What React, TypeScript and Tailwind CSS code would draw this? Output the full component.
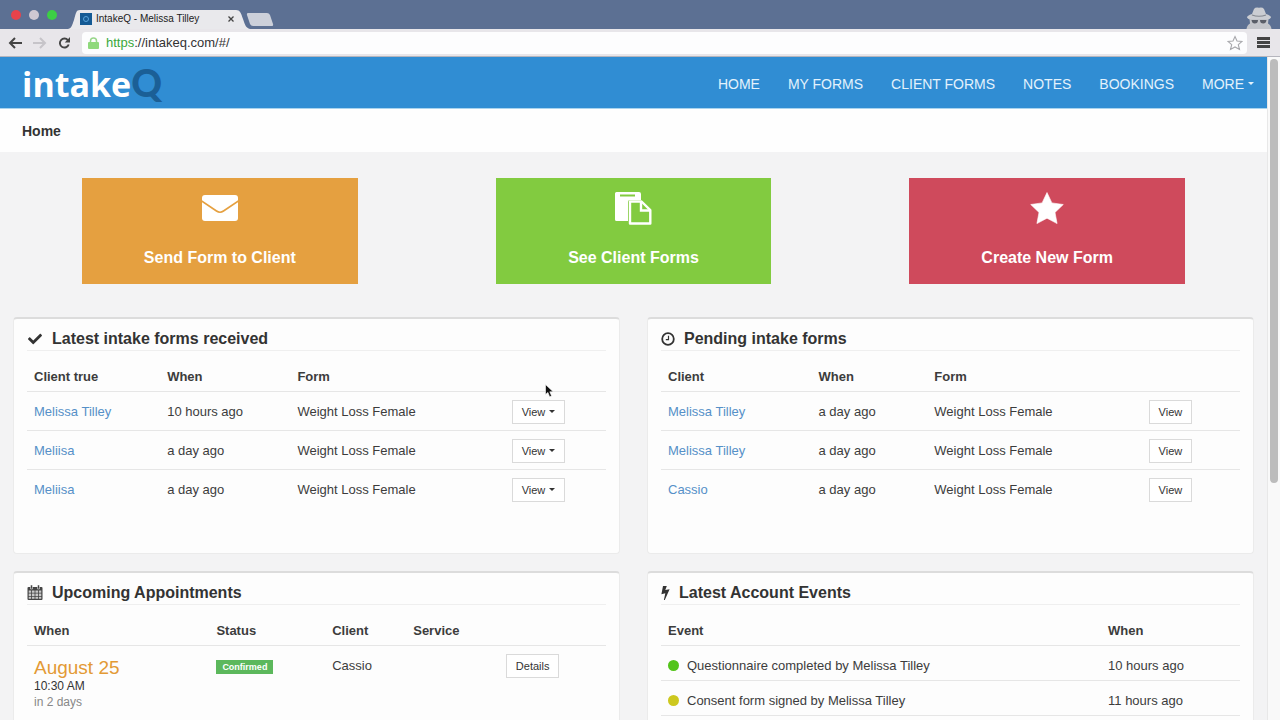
import type { ReactNode } from "react";
import { FaCheck } from "react-icons/fa";

const navItems = ["HOME", "MY FORMS", "CLIENT FORMS", "NOTES", "BOOKINGS"];

function EnvelopeIcon() {
  return (
    <svg viewBox="0 0 36 26" className="h-[26px] w-9" aria-hidden="true">
      <rect width="36" height="26" rx="3" fill="#fff" />
      <path d="M-1 5.500 L14.500 16 Q18 18.500 21.500 16 L37 5.500" fill="none" stroke="#e5a040" strokeWidth="1.600" />
    </svg>
  );
}

function PasteIcon() {
  return (
    <svg viewBox="0 0 37 33" className="h-[33px] w-[37px]" aria-hidden="true">
      <path d="M1.500 0 H24 Q26 0 26 2 V8 H15 Q13 8 13 10 V29 H1.500 Q0 29 0 27.500 V1.500 Q0 0 1.500 0 Z" fill="#fff" />
      <rect x="5" y="2.500" width="15" height="2" fill="#82cb40" />
      <path d="M15 9.500 H26.500 L35.300 18.200 V31.500 H15 Z" fill="none" stroke="#fff" strokeWidth="2.400" strokeLinejoin="round" />
      <path d="M26 10 V18.500 H35" fill="none" stroke="#fff" strokeWidth="2.400" />
    </svg>
  );
}

function StarIcon() {
  return (
    <svg viewBox="0 0 34 32" className="h-8 w-[34px]" aria-hidden="true">
      <path
        d="M17 0.500 L21.900 10.900 L33.300 12.500 L25 20.400 L27.100 31.600 L17 26.200 L6.900 31.600 L9 20.400 L0.700 12.500 L12.100 10.900 Z"
        fill="#fff"
        stroke="#fff"
        strokeWidth="0.600"
        strokeLinejoin="round"
      />
    </svg>
  );
}

function ClockIcon() {
  return (
    <svg viewBox="0 0 14 14" className="h-3.5 w-3.5" fill="none" stroke="#333" aria-hidden="true">
      <circle cx="7" cy="7" r="5.800" strokeWidth="1.800" />
      <path d="M7.500 3.800 V7.600 H4.800" strokeWidth="1.200" />
    </svg>
  );
}

function CalendarIcon() {
  return (
    <svg viewBox="0 0 16 15" className="h-[15px] w-4" aria-hidden="true">
      <path d="M1.500 2 H14.500 Q15.500 2 15.500 3 V14 Q15.500 15 14.500 15 H1.500 Q0.500 15 0.500 14 V3 Q0.500 2 1.500 2 Z" fill="#444" />
      <path d="M3.500 0 H5.500 V4 H3.500 Z M10.500 0 H12.500 V4 H10.500 Z" fill="#444" stroke="#fff" strokeWidth="0.500" />
      <path
        d="M1.700 5.500 h2.500 v2.300 h-2.500z M5 5.500 h2.600 v2.300 h-2.600z M8.400 5.500 h2.600 v2.300 h-2.600z M11.800 5.500 h2.500 v2.300 h-2.500z M1.700 8.600 h2.500 v2.300 h-2.500z M5 8.600 h2.600 v2.300 h-2.600z M8.400 8.600 h2.600 v2.300 h-2.600z M11.800 8.600 h2.500 v2.300 h-2.500z M1.700 11.700 h2.500 v2.100 h-2.500z M5 11.700 h2.600 v2.100 h-2.600z M8.400 11.700 h2.600 v2.100 h-2.600z M11.800 11.700 h2.500 v2.100 h-2.500z"
        fill="#c9c9c9"
      />
    </svg>
  );
}

function BoltIcon() {
  return (
    <svg viewBox="0 0 9 14" className="h-3.5 w-[9px]" aria-hidden="true">
      <path d="M2 0 H5.800 L4.300 4 L8.600 3.200 L3.800 14 H2.900 L4.300 7.300 L0.400 8.200 Z" fill="#333" />
    </svg>
  );
}

function Caret({ className }: { className: string }) {
  return (
    <svg viewBox="0 0 6 3" className={className} aria-hidden="true">
      <path d="M0 0 H6 L3 3 Z" fill="currentColor" />
    </svg>
  );
}

function BrowserChrome() {
  return (
    <header className="shrink-0">
      <div className="flex h-[29px] items-end bg-[#5c7093]">
        <div className="flex w-[68px] items-center gap-2 self-center pl-[11px]">
          <span className="h-2.5 w-2.5 rounded-full bg-[#e8434b]" />
          <span className="h-2.5 w-2.5 rounded-full bg-[#cfc8d2]" />
          <span className="h-2.5 w-2.5 rounded-full bg-[#3ccf45]" />
        </div>
        <div className="relative h-5 w-[182px]">
          <svg viewBox="0 0 182 20" className="absolute inset-0 h-full w-full" aria-hidden="true">
            <path d="M0 20 C4 19 4 16 6 11 C8 4 8 1 12 1 H168 C172 1 173 4 175 10 C177 16 178 19 182 20 Z" fill="#e9e9ec" />
          </svg>
          <div className="relative flex h-full items-center gap-1 pr-[13px] pl-3">
            <span className="flex h-3 w-3 items-center justify-center bg-[#145a94]">
              <span className="h-1.5 w-1.5 rounded-full border border-[#5aa5dc]" />
            </span>
            <span className="flex-1 whitespace-nowrap text-[10px] leading-3 text-[#222]">IntakeQ - Melissa Tilley</span>
            <button type="button" aria-label="Close tab" className="flex h-3 w-3 items-center justify-center">
              <svg viewBox="0 0 6 6" className="h-1.5 w-1.5" stroke="#444" strokeWidth="1.300" aria-hidden="true">
                <path d="M0.500 0.500 L5.500 5.500 M5.500 0.500 L0.500 5.500" />
              </svg>
            </button>
          </div>
        </div>
        <button type="button" aria-label="New tab" className="self-center">
          <svg viewBox="0 0 28 13" className="-ml-1 mt-2.5 h-[13px] w-7" aria-hidden="true">
            <path d="M2 0 H21 Q23 0 24 2 L27 11 Q27.500 13 26 13 H7 Q5 13 4 11 L1 2 Q0.500 0 2 0 Z" fill="#ccd0da" />
          </svg>
        </button>
        <svg viewBox="0 0 26 22" className="mr-2 ml-auto h-[22px] w-[26px]" aria-hidden="true">
          <path d="M6 7 L8 2 Q9.500 0 13 0.800 Q16.500 0 18 2 L20 7 Q25 8.500 25 10.500 Q24 13.500 13 13.500 Q2 13.500 1 10.500 Q1 8.500 6 7 Z" fill="#cbcdd2" />
          <path d="M3.500 12 H22.500 L22 16.500 Q25 18 25.500 22 H0.500 Q1 18 4 16.500 Z" fill="#c3c5ca" />
          <path d="M5.500 13 H12 Q12 16.500 8.700 16.500 Q6 16.500 5.500 13 Z M14 13 H20.500 Q20 16.500 17.300 16.500 Q14 16.500 14 13 Z" fill="#5a5e68" />
          <path d="M6 8 Q13 10.500 20 8" stroke="#84888f" strokeWidth="1.200" fill="none" />
        </svg>
      </div>
      <div className="flex h-7 items-center border-b border-[#b5b5bd] bg-[#e8e6ea]">
        <div className="flex w-[82px] items-center gap-[11px] pl-2">
          <button type="button" aria-label="Back">
            <svg viewBox="0 0 14 12" className="h-3 w-3.5" fill="none" stroke="#444" strokeWidth="2" aria-hidden="true">
              <path d="M14 6 H2 M7 1 L2 6 L7 11" />
            </svg>
          </button>
          <button type="button" aria-label="Forward">
            <svg viewBox="0 0 14 12" className="h-3 w-3.5" fill="none" stroke="#c6c4c9" strokeWidth="2" aria-hidden="true">
              <path d="M0 6 H12 M7 1 L12 6 L7 11" />
            </svg>
          </button>
          <button type="button" aria-label="Reload">
            <svg viewBox="0 0 13 12" className="h-3 w-[13px]" aria-hidden="true">
              <path d="M10 3.300 A4.500 4.500 0 1 0 10.700 7.500" fill="none" stroke="#444" strokeWidth="1.900" />
              <path d="M12 0 V5.500 H6.800 Z" fill="#444" />
            </svg>
          </button>
        </div>
        <div className="flex h-[22px] flex-1 items-center rounded-sm bg-[#fdfdfe] pr-1 pl-1.5">
          <svg viewBox="0 0 11 12" className="h-3 w-[11px]" aria-hidden="true">
            <path d="M2.500 6 V4 a3 3 0 0 1 6 0 V6" fill="none" stroke="#98d68a" strokeWidth="1.500" />
            <rect y="5" width="11" height="7" rx="1" fill="#8fd97c" />
          </svg>
          <a href="https://intakeq.com/#/" className="ml-[7px] flex-1 text-[13px] leading-4 text-[#333]">
            <span className="text-[#3aa83a]">https</span>://intakeq.com/#/
          </a>
          <button type="button" aria-label="Bookmark">
            <svg viewBox="0 0 16 16" className="h-4 w-4" fill="none" stroke="#a8a8ac" strokeWidth="1.100" aria-hidden="true">
              <path d="M8 1.500 L10 6 L15 6.400 L11.300 9.600 L12.500 14.500 L8 11.900 L3.500 14.500 L4.700 9.600 L1 6.400 L6 6 Z" />
            </svg>
          </button>
        </div>
        <button type="button" aria-label="Menu" className="flex w-[33px] flex-col items-center gap-px">
          <span className="h-[3px] w-[13px] bg-[#444]" />
          <span className="h-[3px] w-[13px] bg-[#444]" />
          <span className="h-[3px] w-[13px] bg-[#444]" />
        </button>
      </div>
    </header>
  );
}

function Tile({ color, icon, label }: { color: string; icon: ReactNode; label: string }) {
  return (
    <a href="#" className={`flex h-[106px] w-2/3 flex-col items-center justify-self-center text-white ${color}`}>
      <span className="flex h-[60px] items-center justify-center">{icon}</span>
      <span className="mt-2.5 text-base leading-5 font-bold">{label}</span>
    </a>
  );
}

function Card({ icon, title, children }: { icon: ReactNode; title: string; children: ReactNode }) {
  return (
    <section className="min-h-[237px] rounded-sm border border-t-2 border-[#ebebeb] border-t-[#dcdcdc] bg-[#fdfdfd] px-[13px]">
      <h2 className="flex h-8 items-center gap-[9px] border-b border-[#efefef] pt-2 text-base leading-5 font-bold text-[#333]">
        {icon}
        {title}
      </h2>
      {children}
    </section>
  );
}

function Th({ className = "", children }: { className?: string; children?: ReactNode }) {
  return <th className={`h-10 px-[7px] pt-3 text-left font-bold ${className}`}>{children}</th>;
}

function SmallButton({ children }: { children: ReactNode }) {
  return (
    <button
      type="button"
      className="inline-flex h-6 items-center gap-1 border border-[#dadada] bg-white px-[9px] align-middle text-[11px] leading-4 text-[#333]"
    >
      {children}
    </button>
  );
}

const tableClass = "w-full table-fixed text-[13px] leading-4 text-[#3c3c3c]";
const rowClass = "h-[39px] border-t border-[#e6e6e6]";

function FormsTable({
  headings,
  widths,
  rows,
  dropdown,
}: {
  headings: string[];
  widths: string[];
  rows: string[][];
  dropdown?: boolean;
}) {
  return (
    <table className={tableClass}>
      <thead>
        <tr>
          {headings.map((h, i) => (
            <Th key={h} className={widths[i]}>
              {h}
            </Th>
          ))}
          <Th />
        </tr>
      </thead>
      <tbody>
        {rows.map(([client, when, form], i) => (
          <tr key={i} className={rowClass}>
            <td className="px-[7px] pt-0.5">
              <a href="#" className="text-[#5590c8]">
                {client}
              </a>
            </td>
            <td className="px-[7px] pt-0.5">{when}</td>
            <td className="px-[7px] pt-0.5">{form}</td>
            <td className="px-[7px] pt-0.5">
              <SmallButton>
                View
                {dropdown && <Caret className="h-[3px] w-1.5" />}
              </SmallButton>
            </td>
          </tr>
        ))}
      </tbody>
    </table>
  );
}

export default function App() {
  return (
    <div className="relative flex h-screen flex-col overflow-hidden bg-[#f3f3f4] font-['Liberation_Sans',Arial,sans-serif]">
      <BrowserChrome />
      <div className="flex min-h-0 flex-1">
        <div className="min-w-0 flex-1 overflow-hidden">
          <nav className="flex h-[52px] items-center justify-between border-b border-[#a9d4ee] bg-[#308dd3] pr-[13px] pl-[22px]">
            <a href="#" className="flex items-baseline font-['Open_Sans',sans-serif] text-[34px] leading-[50px] font-bold text-white">
              intake<span className="font-['Lato',sans-serif] text-[38px] font-black text-[#1b5f96]">Q</span>
            </a>
            <div className="flex items-center gap-7 pt-0.5 text-sm leading-5 text-[#e3f2fc]">
              {navItems.map((item) => (
                <a key={item} href="#">
                  {item}
                </a>
              ))}
              <a href="#" className="flex items-center gap-1">
                MORE
                <Caret className="h-[3px] w-1.5" />
              </a>
            </div>
          </nav>
          <div className="flex h-[43px] items-center bg-[#fefefe] px-[22px]">
            <h1 className="text-sm leading-5 font-bold text-[#333]">Home</h1>
          </div>
          <main className="px-[13px]">
            <div className="grid grid-cols-3 pt-[26px] pb-[33px]">
              <Tile color="bg-[#e5a040]" icon={<EnvelopeIcon />} label="Send Form to Client" />
              <Tile color="bg-[#82cb40]" icon={<PasteIcon />} label="See Client Forms" />
              <Tile color="bg-[#cf4a5c]" icon={<StarIcon />} label="Create New Form" />
            </div>
            <div className="grid grid-cols-2 gap-x-[27px] gap-y-[17px]">
              <Card icon={<FaCheck className="h-3.5 w-4" />} title="Latest intake forms received">
                <FormsTable
                  headings={["Client true", "When", "Form"]}
                  widths={["w-[23%]", "w-[22.5%]", "w-[37%]"]}
                  rows={[
                    ["Melissa Tilley", "10 hours ago", "Weight Loss Female"],
                    ["Meliisa", "a day ago", "Weight Loss Female"],
                    ["Meliisa", "a day ago", "Weight Loss Female"],
                  ]}
                  dropdown
                />
              </Card>
              <Card icon={<ClockIcon />} title="Pending intake forms">
                <FormsTable
                  headings={["Client", "When", "Form"]}
                  widths={["w-[26%]", "w-[20%]", "w-[37%]"]}
                  rows={[
                    ["Melissa Tilley", "a day ago", "Weight Loss Female"],
                    ["Melissa Tilley", "a day ago", "Weight Loss Female"],
                    ["Cassio", "a day ago", "Weight Loss Female"],
                  ]}
                />
              </Card>
              <Card icon={<CalendarIcon />} title="Upcoming Appointments">
                <table className={tableClass}>
                  <thead>
                    <tr>
                      <Th className="w-[31.5%]">When</Th>
                      <Th className="w-[20%]">Status</Th>
                      <Th className="w-[14%]">Client</Th>
                      <Th className="w-[16%]">Service</Th>
                      <Th />
                    </tr>
                  </thead>
                  <tbody>
                    <tr className="border-t border-[#e6e6e6] align-top">
                      <td className="px-[7px] pt-3">
                        <div className="text-[19px] leading-5 text-[#e39a35]">August 25</div>
                        <div className="text-xs leading-4 text-[#333]">10:30 AM</div>
                        <div className="text-xs leading-4 text-[#888]">in 2 days</div>
                      </td>
                      <td className="px-[7px] pt-3.5">
                        <span className="inline-flex h-3.5 items-center bg-[#5cb85c] px-1.5 align-top text-[9px] leading-3 font-bold text-white">
                          Confirmed
                        </span>
                      </td>
                      <td className="px-[7px] pt-3">Cassio</td>
                      <td />
                      <td className="px-[7px] pt-2">
                        <SmallButton>Details</SmallButton>
                      </td>
                    </tr>
                  </tbody>
                </table>
              </Card>
              <Card icon={<BoltIcon />} title="Latest Account Events">
                <table className={tableClass}>
                  <thead>
                    <tr>
                      <Th className="w-[76%]">Event</Th>
                      <Th>When</Th>
                    </tr>
                  </thead>
                  <tbody>
                    <tr className="h-[35px] border-t border-[#e6e6e6]">
                      <td className="px-[7px] pt-1.5">
                        <span className="flex items-center gap-2">
                          <span className="h-[11px] w-[11px] rounded-full bg-[#53c41a]" />
                          Questionnaire completed by Melissa Tilley
                        </span>
                      </td>
                      <td className="px-[7px] pt-1.5">10 hours ago</td>
                    </tr>
                    <tr className="h-[35px] border-y border-[#e6e6e6]">
                      <td className="px-[7px] pt-1.5">
                        <span className="flex items-center gap-2">
                          <span className="h-[11px] w-[11px] rounded-full bg-[#cdc81f]" />
                          Consent form signed by Melissa Tilley
                        </span>
                      </td>
                      <td className="px-[7px] pt-1.5">11 hours ago</td>
                    </tr>
                  </tbody>
                </table>
              </Card>
            </div>
          </main>
        </div>
        <div className="flex w-[13px] justify-center border-l border-[#e8e8e8] bg-[#f9f9f9] pt-0.5">
          <div className="h-[424px] w-2 rounded-full bg-[#bcbcbc]" />
        </div>
      </div>
      <svg viewBox="0 0 10 14" className="absolute top-[384px] left-[545px] h-3.5 w-2.5" aria-hidden="true">
        <path d="M0.500 0.500 V10.500 L2.900 8.400 L4.600 12.800 L6.600 12 L4.800 7.800 H8.200 Z" fill="#111" stroke="#fff" strokeWidth="0.600" />
      </svg>
    </div>
  );
}
